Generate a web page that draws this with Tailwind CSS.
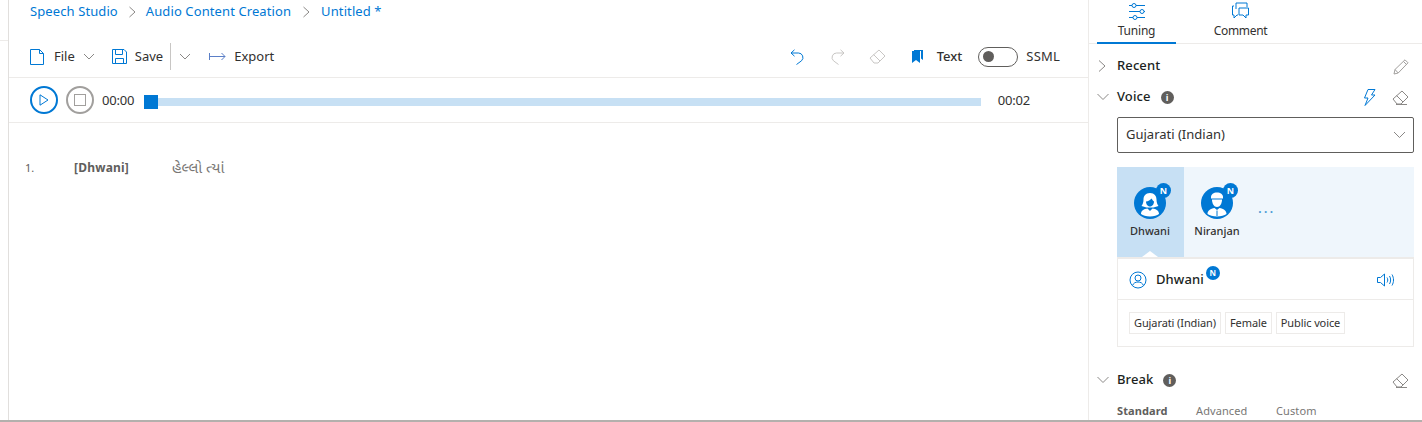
<!DOCTYPE html>
<html lang="en">
  <head>
    <meta charset="UTF-8" />
    <title>Audio Content Creation</title>
    <script src="https://cdn.jsdelivr.net/npm/@tailwindcss/browser@4"></script>
  </head>
  <body class="bg-white h-[422px] overflow-hidden font-['Noto_Sans','Open_Sans',sans-serif] text-[13px] text-[#323130]">
    <div class="flex h-[420px] overflow-hidden">
      <!-- Left rail -->
      <div class="w-[9px] shrink-0 border-r border-[#e1dfdd]">
        <div class="h-[41px] border-b border-[#edebe9]"></div>
      </div>

      <!-- Main column -->
      <div class="w-[1080px] shrink-0 border-r border-[#edebe9]">
        <div class="h-[23px] pl-[21px] flex items-center gap-[8px] text-[#0078d4] text-[13px] tracking-[0.1px]">
          <span>Speech Studio</span>
          <svg class="w-[12px] h-[12px]" viewBox="0 0 12 12" fill="none" stroke="#8a8886"><path d="M3.500 1l5.500 5-5.500 5"/></svg>
          <span class="mr-[1px]">Audio Content Creation</span>
          <svg class="w-[12px] h-[12px]" viewBox="0 0 12 12" fill="none" stroke="#8a8886"><path d="M3.500 1l5.500 5-5.500 5"/></svg>
          <span class="ml-[1px]">Untitled *</span>
        </div>

        <!-- Toolbar -->
        <div class="h-[55px] pt-[13px] pl-[21px] pr-[28px] flex items-center justify-between border-b border-[#edebe9]">
          <div class="flex items-center">
            <svg class="w-[14px] h-[16px] mr-[10px]" viewBox="0 0 14 16" fill="none" stroke="#0078d4"><path d="M.5.500h9l4 4v11H.5zM9.500.500v4h4"/></svg>
            <span>File</span>
            <svg class="w-[12px] h-[8px] ml-[8px] mr-[17px]" viewBox="0 0 12 8" fill="none" stroke="#8a8886"><path d="M1 1l5 5 5-5"/></svg>
            <svg class="w-[15px] h-[15px] mr-[8px]" viewBox="0 0 15 15" fill="none" stroke="#0078d4"><path d="M.5.500h11.500l2.500 2.500v11.500H.5zM3.500.500v5h7v-5M3.500 14.500v-5h8v5"/></svg>
            <span>Save</span>
            <div class="w-px h-[27px] bg-[#c8c6c4] ml-[7px] mr-[8px]"></div>
            <svg class="w-[12px] h-[8px] mr-[18px]" viewBox="0 0 12 8" fill="none" stroke="#8a8886"><path d="M1 1l5 5 5-5"/></svg>
            <svg class="w-[17px] h-[9px] mr-[8px]" viewBox="0 0 17 9" fill="none" stroke="#5b7fc7"><path d="M.5 1v7M1 4.500h15M12.500 1l3.500 3.500-3.500 3.500"/></svg>
            <span>Export</span>
          </div>
          <div class="flex items-center">
            <svg class="w-[14px] h-[16px] mr-[27px]" viewBox="0 0 14 16" fill="none" stroke="#0078d4"><path d="M4.500.800L1 4l3.500 3.200M1 4h7.500a4.500 4.500 0 0 1 3 7.800L6.500 15.500"/></svg>
            <svg class="w-[14px] h-[16px] mr-[24px]" viewBox="0 0 14 16" fill="none" stroke="#c8c6c4"><path d="M9.500.800L13 4 9.500 7.200M13 4H5.500a4.500 4.500 0 0 0-3 7.800l5 3.700"/></svg>
            <svg class="w-[17px] h-[15px] mr-[26px]" viewBox="0 0 17 15" fill="none" stroke="#c8c6c4"><path d="M1 9L10 1l6 6-7 7H5zM4.500 5.500L11 12"/></svg>
            <svg class="w-[11px] h-[13px] mr-[14px]" viewBox="0 0 11 13" fill="#0078d4"><path d="M0 1h8v12l-4-3-4 3zM2 0h9v10l-2-1.500V1H2z"/></svg>
            <span class="mr-[16px] font-medium">Text</span>
            <div class="w-[40px] h-[20px] border border-[#605e5c] rounded-full flex items-center pl-[4px] mr-[8px]">
              <div class="w-[11px] h-[11px] rounded-full bg-[#605e5c]"></div>
            </div>
            <span class="tracking-[0.2px]">SSML</span>
          </div>
        </div>

        <!-- Player -->
        <div class="h-[45px] pl-[21px] pr-[58px] flex items-center border-b border-[#edebe9]">
          <div class="w-[28px] h-[28px] rounded-full border-2 border-[#0078d4] flex items-center justify-center mr-[8px]">
            <svg class="w-[10px] h-[12px]" viewBox="0 0 10 12" fill="none" stroke="#0078d4"><path d="M1 .8L9 6l-8 5.200z"/></svg>
          </div>
          <div class="w-[28px] h-[28px] rounded-full border-2 border-[#a19f9d] flex items-center justify-center mr-[8px]">
            <div class="w-[12px] h-[12px] border border-[#a19f9d]"></div>
          </div>
          <span class="text-[13px] tracking-[-0.2px] w-[42px] mt-[2px]">00:00</span>
          <div class="relative flex-1 h-[8px] mt-[4px] bg-[#c7e0f4]">
            <div class="absolute left-0 -top-[3px] w-[14px] h-[14px] bg-[#0078d4]"></div>
          </div>
          <span class="ml-[17px] text-[13px] tracking-[-0.2px] mt-[2px]">00:02</span>
        </div>

        <!-- Script line -->
        <div class="pt-[34px] pl-[16px] flex items-center text-[#605e5c]">
          <span class="w-[49px] text-[11px] pt-[3px]">1.</span>
          <span class="w-[98px] text-[12px] font-bold tracking-[0.2px] pt-[2px]">[Dhwani]</span>
          <span class="text-[15px] leading-[20px] text-[#797775] font-['Noto_Sans','Noto_Sans_Gujarati','DejaVu_Sans',sans-serif]">હેલ્લો ત્યાં</span>
        </div>
      </div>

      <!-- Right panel -->
      <div class="flex-1 min-w-0">
        <div class="h-[44px] border-b border-[#edebe9] pl-[8px] flex">
          <div class="w-[79px] h-[44px] border-b-2 border-[#0078d4] flex flex-col items-center text-[12px]">
            <svg class="w-[18px] h-[18px] mt-[2px]" viewBox="0 0 18 18" fill="none" stroke="#0078d4"><path d="M1 3.500h3M8 3.500h9M1 9.500h11M16 9.500h1M1 15.500h4M9 15.500h8"/><circle cx="6" cy="3.500" r="2"/><circle cx="14" cy="9.500" r="2"/><circle cx="7" cy="15.500" r="2"/></svg>
            <span class="mt-[2px] tracking-[-0.2px]">Tuning</span>
          </div>
          <div class="w-[129px] flex flex-col items-center text-[12px]">
            <svg class="w-[17px] h-[17px] mt-[2px]" viewBox="0 0 17 17" fill="none" stroke="#0078d4"><path d="M4 7V1h11v4M2 4H.5v9H2v3l3-3h1M7 6h9.500v7H14v3l-3-3H7z"/></svg>
            <span class="mt-[3px] tracking-[-0.3px]">Comment</span>
          </div>
        </div>

        <div class="pl-[8px] pr-[8px]">
          <!-- Recent -->
          <div class="h-[42px] pt-[2px] flex items-center">
            <svg class="w-[10px] h-[12px] mr-[10px]" viewBox="0 0 10 12" fill="none" stroke="#8a8886"><path d="M2 .5l6 5.500-6 5.500"/></svg>
            <span class="font-medium tracking-[0.1px] text-[#201f1e]">Recent</span>
            <svg class="w-[16px] h-[16px] ml-auto mr-[5px] mt-[2px]" viewBox="0 0 16 16" fill="none" stroke="#a19f9d"><path d="M1 15l1-4.500L12 .8l3 3L5.200 14zM10.500 2.500l3 3M2 10.500L5.200 14"/></svg>
          </div>

          <!-- Voice -->
          <div class="h-[20px] mt-[1px] flex items-center">
            <svg class="w-[12px] h-[8px] mr-[8px]" viewBox="0 0 12 8" fill="none" stroke="#8a8886"><path d="M.5 1l5.500 5.500L11.500 1"/></svg>
            <span class="font-medium tracking-[0.1px] text-[#201f1e]">Voice</span>
            <div class="w-[13px] h-[13px] rounded-full bg-[#605e5c] ml-[10px] flex items-center justify-center text-white text-[9px] font-bold leading-none">i</div>
            <svg class="w-[13px] h-[17px] ml-auto mr-[16px]" viewBox="0 0 13 17" fill="none" stroke="#0078d4"><path d="M5 .5h7L8.500 6H12L2 16.500 5 9H1.500z"/></svg>
            <svg class="w-[17px] h-[15px] mr-[5px]" viewBox="0 0 17 15" fill="none" stroke="#8a8886"><path d="M1 9L10 1l6 6-7 7H5zM4.500 5.500L11 12M4 14.500h11"/></svg>
          </div>

          <div class="ml-[20px] mt-[10px] h-[36px] border border-[#605e5c] rounded-[2px] flex items-center pl-[8px] pr-[7px]">
            <span>Gujarati (Indian)</span>
            <svg class="w-[13px] h-[8px] ml-auto" viewBox="0 0 13 8" fill="none" stroke="#8a8886"><path d="M1 1l5.500 5.500L12 1"/></svg>
          </div>

          <!-- Voice tiles -->
          <div class="ml-[20px] mt-[14px] h-[90px] bg-[#eff6fc] flex text-[11px] font-medium text-[#323130]">
            <div class="relative w-[67px] pr-[1px] bg-[#c7e0f4] flex flex-col items-center pt-[20px]">
              <div class="relative w-[32px] h-[32px] rounded-full bg-[#0078d4]">
                <svg class="w-[32px] h-[32px]" viewBox="0 0 32 32"><path fill="white" d="M16 6c4.500 0 6.500 3 6.500 6.500 0 3 .8 5 2 6.500l-5 1.500h-7l-5-1.500c1.200-1.500 2-3.500 2-6.500C9.500 9 11.500 6 16 6z"/><path fill="#0078d4" d="M12 14.500c2 0 4.500-1.500 5.500-3 1 1.500 1.800 2.500 2.500 3 0 2.500-1.500 5-4 5s-4-2.500-4-5z"/><path fill="white" d="M7 27c0-3.500 3-5 6.500-5.500l2.500 2.500 2.500-2.500c3.500.5 6.500 2 6.500 5.500-2 1.500-5 2.500-9 2.500s-7-1-9-2.500z"/></svg>
                <div class="absolute -top-[4px] -right-[5px] w-[15px] h-[15px] rounded-full bg-[#0078d4] flex items-center justify-center text-white text-[9px] font-bold leading-none">N</div>
              </div>
              <span class="mt-[4px]">Dhwani</span>
              <div class="absolute bottom-0 left-[25px] w-0 h-0 border-x-[8px] border-x-transparent border-b-[6px] border-b-white"></div>
            </div>
            <div class="w-[67px] pr-[1px] flex flex-col items-center pt-[20px]">
              <div class="relative w-[32px] h-[32px] rounded-full bg-[#0078d4]">
                <svg class="w-[32px] h-[32px]" viewBox="0 0 32 32"><path fill="white" d="M16 5.500c3.500 0 6 1.800 6 4.500v1.500H10V10c0-2.700 2.500-4.500 6-4.500z"/><path fill="white" d="M11 12.500h10c0 4-2 7.500-5 7.500s-5-3.500-5-7.500z"/><path fill="white" d="M6.500 27c0-3.500 3-5.500 7-6l2.500 2 2.500-2c4 .5 7 2.500 7 6-2 1.500-5.500 2.500-9.500 2.500s-7.500-1-9.500-2.500z"/><path fill="none" stroke="#0078d4" d="M16 23.500V29"/></svg>
                <div class="absolute -top-[4px] -right-[5px] w-[15px] h-[15px] rounded-full bg-[#0078d4] flex items-center justify-center text-white text-[9px] font-bold leading-none">N</div>
              </div>
              <span class="mt-[4px]">Niranjan</span>
            </div>
            <div class="pl-[7px] pt-[34px] text-[#4a9ad4] text-[14px] tracking-[2px] leading-none">...</div>
          </div>

          <!-- Voice detail card -->
          <div class="ml-[20px] border border-t-2 border-[#edebe9] h-[90px]">
            <div class="h-[41px] pt-[2px] flex items-center pl-[11px] pr-[19px] border-b border-[#edebe9]">
              <svg class="w-[18px] h-[18px] mr-[9px]" viewBox="0 0 18 18" fill="none" stroke="#0078d4"><circle cx="9" cy="9" r="8"/><circle cx="9" cy="7" r="3"/><path d="M3.500 14.500c1-2.500 3-3.500 5.500-3.500s4.500 1 5.500 3.500"/></svg>
              <span class="font-medium tracking-[0.1px] text-[#201f1e]">Dhwani</span>
              <div class="w-[14px] h-[14px] -mt-[14px] ml-[2px] rounded-full bg-[#0078d4] flex items-center justify-center text-white text-[8px] font-bold leading-none">N</div>
              <svg class="w-[17px] h-[14px] ml-auto" viewBox="0 0 17 14" fill="none" stroke="#0078d4"><path d="M.5 4.500h3L7.500 1v12l-4-3.500h-3zM10 4.500c1 1.500 1 3.500 0 5M12.500 3c1.500 2.500 1.500 5.500 0 8M15 1.500c2 3.500 2 7.500 0 11"/></svg>
            </div>
            <div class="pt-[12px] pl-[11px] flex gap-[4px] text-[11px] tracking-[-0.1px]">
              <span class="h-[22px] px-[4px] border border-[#edebe9] flex items-center">Gujarati (Indian)</span>
              <span class="h-[22px] px-[4px] border border-[#edebe9] flex items-center">Female</span>
              <span class="h-[22px] px-[4px] border border-[#edebe9] flex items-center">Public voice</span>
            </div>
          </div>

          <!-- Break -->
          <div class="mt-[23px] h-[20px] flex items-center">
            <svg class="w-[12px] h-[8px] mr-[8px]" viewBox="0 0 12 8" fill="none" stroke="#8a8886"><path d="M.5 1l5.500 5.500L11.500 1"/></svg>
            <span class="font-medium tracking-[0.1px] text-[#201f1e]">Break</span>
            <div class="w-[13px] h-[13px] rounded-full bg-[#605e5c] ml-[10px] flex items-center justify-center text-white text-[9px] font-bold leading-none">i</div>
            <svg class="w-[17px] h-[15px] ml-auto mr-[5px]" viewBox="0 0 17 15" fill="none" stroke="#8a8886"><path d="M1 9L10 1l6 6-7 7H5zM4.500 5.500L11 12M4 14.500h11"/></svg>
          </div>
          <div class="ml-[20px] mt-[13px] flex text-[11px] text-[#797775] leading-[16px] tracking-[0.1px]">
            <span class="font-bold text-[#605e5c] w-[79px]">Standard</span>
            <span class="w-[80px]">Advanced</span>
            <span>Custom</span>
          </div>
        </div>
      </div>
    </div>
    <div class="h-[2px] bg-[#b3b0ad]"></div>
  </body>
</html>
